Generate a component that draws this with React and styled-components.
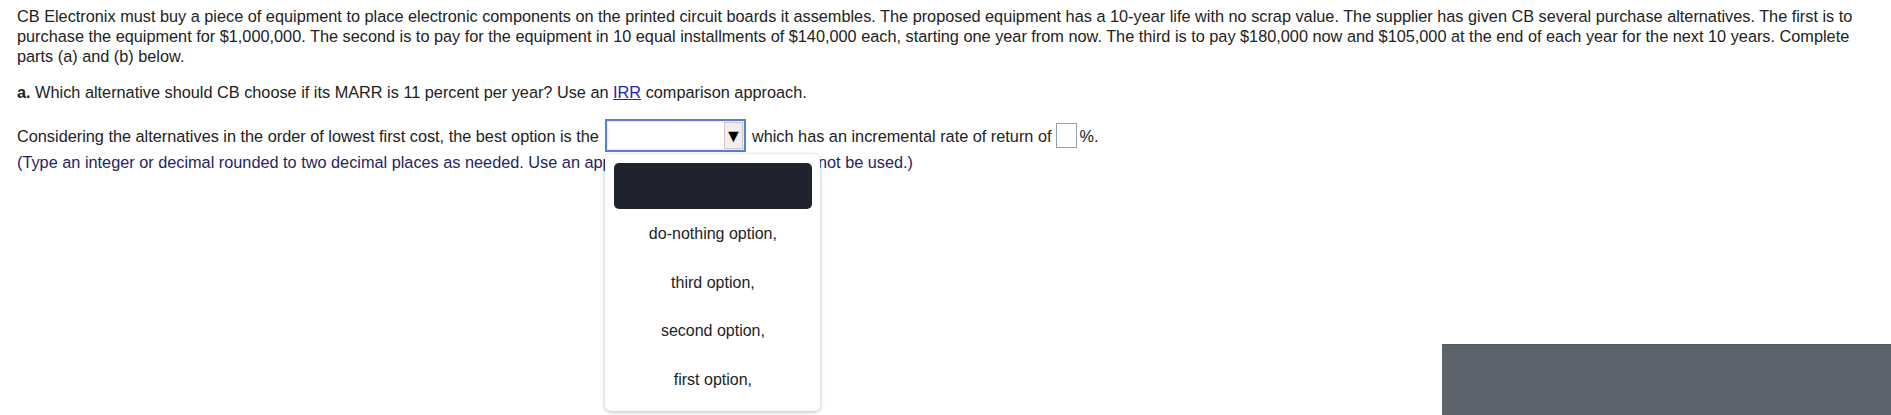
import React from "react";
import styled, { createGlobalStyle } from "styled-components";

const GlobalStyle = createGlobalStyle`
  html, body {
    margin: 0;
    padding: 0;
    background: #ffffff;
  }
  body {
    font-family: "Liberation Sans", Arial, sans-serif;
    color: #222222;
  }
`;

const Page = styled.div`
  box-sizing: border-box;
  min-height: 415px;
  padding: 6px 17px 0 17px;
  font-size: 16.3px;
  line-height: 20px;
`;

const Intro = styled.p`
  margin: 0;
`;

const Question = styled.p`
  margin: 16px 0 0 0;
`;

const Link = styled.a`
  color: #2525a8;
  text-decoration: underline;
`;

const AnswerRow = styled.div`
  display: flex;
  align-items: center;
  height: 33px;
  margin-top: 17px;
  white-space: nowrap;
`;

const SelectWrap = styled.div`
  position: relative;
  margin: 0 6px 0 6px;
`;

const SelectBox = styled.div`
  box-sizing: border-box;
  width: 141px;
  height: 33px;
  border: 2px solid #5b80c8;
  box-shadow: inset 0 0 2px rgba(90, 128, 200, 0.5);
  background: #fff;
  display: flex;
  justify-content: flex-end;
  align-items: center;
  padding-right: 1px;
`;

const ArrowButton = styled.div`
  box-sizing: border-box;
  width: 19px;
  height: 27px;
  background: #efefef;
  border: 1px solid #c9c9c9;
  display: flex;
  align-items: center;
  justify-content: center;
  font-size: 18px;
  color: #000;
`;

const Popup = styled.div`
  position: absolute;
  top: 35px;
  left: 0;
  width: 215px;
  height: 257px;
  box-sizing: border-box;
  padding: 9px 8px 8px 9px;
  background: #fff;
  border-radius: 6px;
  box-shadow: 0 1px 4px rgba(0, 0, 0, 0.28);
  z-index: 2;
`;

const DarkItem = styled.div`
  height: 46px;
  border-radius: 5px;
  background: #1f232d;
  margin-bottom: 1px;
`;

const Option = styled.div`
  height: 48.5px;
  display: flex;
  align-items: center;
  justify-content: center;
  font-size: 16px;
  color: #1d1d1d;
`;

const SmallInput = styled.span`
  display: inline-block;
  box-sizing: border-box;
  width: 21px;
  height: 25px;
  border: 1px solid #8ea2b6;
  margin: 0 2px 0 5px;
`;

const Hint = styled.p`
  margin: 0;
  color: #25255e;
`;

const Dock = styled.div`
  position: fixed;
  right: 0;
  bottom: 0;
  width: 449px;
  height: 70px;
  background: #5c636c;
  border-top: 1px solid #535960;
`;

const options = ["do-nothing option,", "third option,", "second option,", "first option,"];

export default function App() {
  return (
    <>
      <GlobalStyle />
      <Page>
        <Intro>
          CB Electronix must buy a piece of equipment to place electronic components on the printed circuit boards it
          assembles. The proposed equipment has a 10-year life with no scrap value. The supplier has given CB several
          purchase alternatives. The first is to purchase the equipment for $1,000,000. The second is to pay for the
          equipment in 10 equal installments of $140,000 each, starting one year from now. The third is to pay $180,000
          now and $105,000 at the end of each year for the next 10 years. Complete parts (a) and (b) below.
        </Intro>
        <Question>
          <b>a.</b> Which alternative should CB choose if its MARR is 11 percent per year? Use an <Link>IRR</Link>{" "}
          comparison approach.
        </Question>
        <AnswerRow>
          Considering the alternatives in the order of lowest first cost, the best option is the
          <SelectWrap>
            <SelectBox>
              <ArrowButton>▼</ArrowButton>
            </SelectBox>
            <Popup>
              <DarkItem />
              {options.map((o) => (
                <Option key={o}>{o}</Option>
              ))}
            </Popup>
          </SelectWrap>
          which has an incremental rate of return of
          <SmallInput />
          %.
        </AnswerRow>
        <Hint>
          (Type an integer or decimal rounded to two decimal places as needed. Use an approach where do-nothing can not
          be used.)
        </Hint>
      </Page>
      <Dock />
    </>
  );
}
